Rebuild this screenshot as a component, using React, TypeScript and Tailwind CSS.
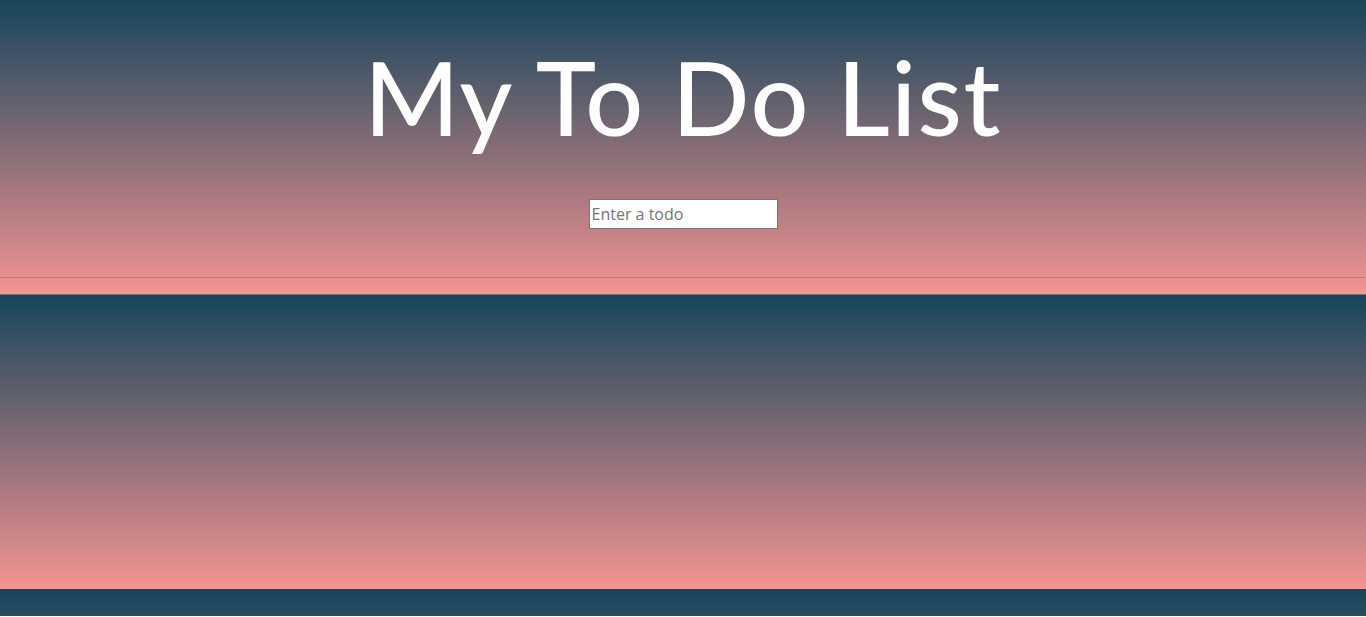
import { useState } from 'react';

export default function App() {
  const [todo, setTodo] = useState('');

  return (
    <div className="h-[616px] bg-[linear-gradient(to_bottom,#16455b,#f39492)] bg-[length:100%_294.5px] bg-repeat-y">
      <header className="h-[278px] border-b border-black/15 flex flex-col items-center">
        <h1
          className="mt-[35px] text-white text-[102px] font-medium leading-[124px] tracking-[1.5px]"
          style={{ fontFamily: 'Lato, "Open Sans", sans-serif' }}
        >
          My To Do List
        </h1>
        <input
          type="text"
          value={todo}
          onChange={(e) => setTodo(e.target.value)}
          placeholder="Enter a todo"
          className="mt-[40px] w-[189px] h-[30px] bg-white border border-[#767676] px-[2px] text-[16px] text-black placeholder:text-[#757575] outline-none"
          style={{ fontFamily: '"Open Sans", "Noto Sans", sans-serif' }}
        />
      </header>
    </div>
  );
}
